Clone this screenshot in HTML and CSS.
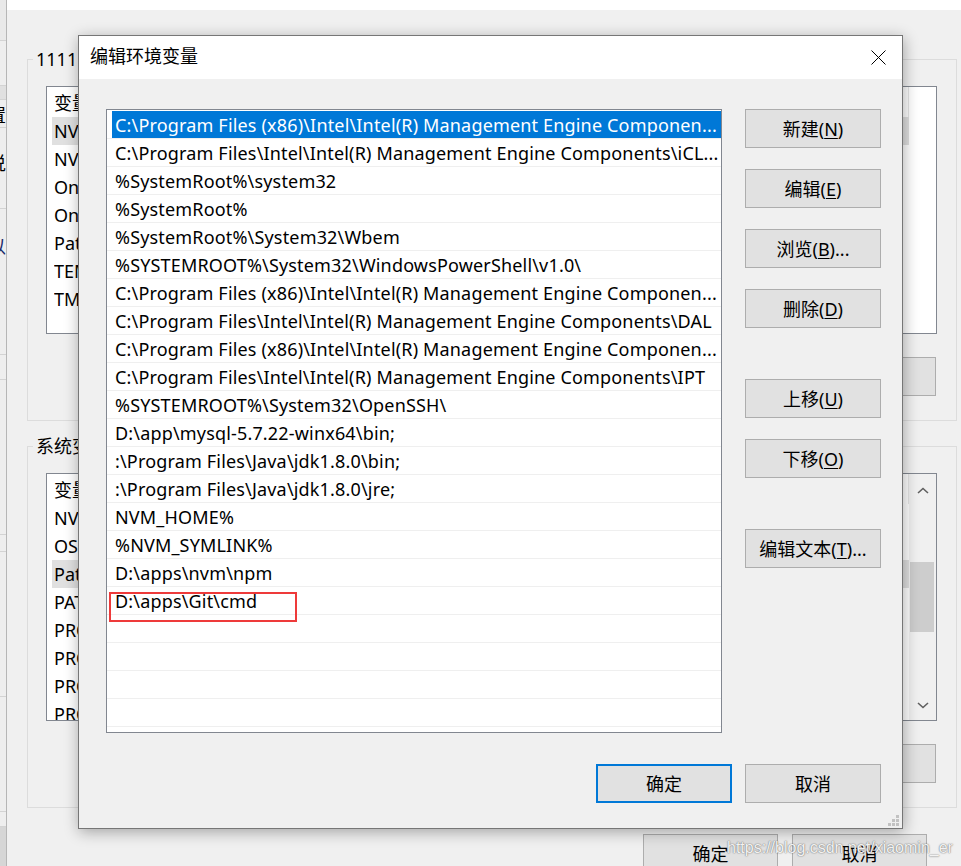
FILE: index.html
```html
<!DOCTYPE html>
<html lang="zh-CN">
<head>
<meta charset="utf-8">
<title>编辑环境变量</title>
<link rel="stylesheet" href="styles.css">
</head>
<body>
<div class="behind">
  <div class="seg h41"></div>
  <div class="seg h45"></div>
  <div class="seg h14 dark"></div>
  <div class="seg h28"><span class="glyph">置</span></div>
  <div class="seg h81"><span class="glyph g2">说</span></div>
  <div class="seg h146"><span class="glyph g3">以</span></div>
  <div class="seg h25"></div>
  <div class="seg h155"></div>
  <div class="seg h17"></div>
  <div class="seg h145"></div>
  <div class="seg h115"></div>
  <div class="seg h15"></div>
  <div class="seg rest"></div>
</div>

<div class="window">
  <div class="topband"></div>

  <fieldset class="group">
    <legend>1111 的用户变量(U)</legend>
    <div class="vlist">
      <div class="vbody">
        <div class="vhead"><span class="c1">变量</span><span class="c2">值</span></div>
        <div class="vrow sel"><span class="c1">NVM_HOME</span><span class="c2">D:\apps\nvm</span></div>
        <div class="vrow"><span class="c1">NVM_SYMLINK</span><span class="c2">D:\apps\nodejs</span></div>
        <div class="vrow"><span class="c1">OneDrive</span><span class="c2">C:\Users\1111\OneDrive</span></div>
        <div class="vrow"><span class="c1">OneDriveConsumer</span><span class="c2">C:\Users\1111\OneDrive</span></div>
        <div class="vrow"><span class="c1">Path</span><span class="c2">%NVM_HOME%;%NVM_SYMLINK%</span></div>
        <div class="vrow"><span class="c1">TEMP</span><span class="c2">%USERPROFILE%\AppData\Local\Temp</span></div>
        <div class="vrow"><span class="c1">TMP</span><span class="c2">%USERPROFILE%\AppData\Local\Temp</span></div>
      </div>
    </div>
    <div class="btnrow">
      <button class="btn wbtn">新建(<u>N</u>)...</button>
      <button class="btn wbtn">编辑(<u>E</u>)...</button>
      <button class="btn wbtn">删除(<u>D</u>)</button>
    </div>
  </fieldset>

  <fieldset class="group second">
    <legend>系统变量(S)</legend>
    <div class="vlist">
      <div class="vbody full">
        <div class="vhead"><span class="c1">变量</span><span class="c2">值</span></div>
        <div class="vrow"><span class="c1">NVM_HOME</span><span class="c2">D:\apps\nvm</span></div>
        <div class="vrow"><span class="c1">OS</span><span class="c2">Windows_NT</span></div>
        <div class="vrow sel"><span class="c1">Path</span><span class="c2">C:\Program Files (x86)\Intel</span></div>
        <div class="vrow"><span class="c1">PATHEXT</span><span class="c2">.COM;.EXE;.BAT;.CMD</span></div>
        <div class="vrow"><span class="c1">PROCESSOR_ARCHITECTURE</span><span class="c2">AMD64</span></div>
        <div class="vrow"><span class="c1">PROCESSOR_IDENTIFIER</span><span class="c2">Intel64 Family 6</span></div>
        <div class="vrow"><span class="c1">PROCESSOR_LEVEL</span><span class="c2">6</span></div>
        <div class="vrow"><span class="c1">PROCESSOR_REVISION</span><span class="c2">9e0a</span></div>
      </div>
      <div class="vscroll">
        <div class="sb-up">
          <svg width="12" height="7" viewBox="0 0 12 7"><path d="M1 6 L6 1.5 L11 6" fill="none" stroke="#606060" stroke-width="1.6"/></svg>
        </div>
        <div class="sb-track"><div class="sb-thumb"></div></div>
        <div class="sb-down">
          <svg width="12" height="7" viewBox="0 0 12 7"><path d="M1 1 L6 5.5 L11 1" fill="none" stroke="#606060" stroke-width="1.6"/></svg>
        </div>
      </div>
    </div>
    <div class="btnrow">
      <button class="btn wbtn">新建(<u>W</u>)...</button>
      <button class="btn wbtn">编辑(<u>I</u>)...</button>
      <button class="btn wbtn">删除(<u>L</u>)</button>
    </div>
  </fieldset>

  <div class="okrow">
    <button class="btn wbtn">确定</button>
    <button class="btn wbtn">取消</button>
  </div>
</div>

<div class="dialog">
  <div class="titlebar">
    <span class="title">编辑环境变量</span>
    <svg class="close" width="15" height="15" viewBox="0 0 15 15"><path d="M0.5 0.5 L14.5 14.5 M14.5 0.5 L0.5 14.5" stroke="#000" stroke-width="1" fill="none"/></svg>
  </div>
  <div class="dbody">
    <div class="dmain">
      <div class="plist">
        <div class="prow sel"><span class="ptxt">C:\Program Files (x86)\Intel\Intel(R) Management Engine Componen...</span></div>
        <div class="prow"><span class="ptxt">C:\Program Files\Intel\Intel(R) Management Engine Components\iCL...</span></div>
        <div class="prow"><span class="ptxt">%SystemRoot%\system32</span></div>
        <div class="prow"><span class="ptxt">%SystemRoot%</span></div>
        <div class="prow"><span class="ptxt">%SystemRoot%\System32\Wbem</span></div>
        <div class="prow"><span class="ptxt">%SYSTEMROOT%\System32\WindowsPowerShell\v1.0\</span></div>
        <div class="prow"><span class="ptxt">C:\Program Files (x86)\Intel\Intel(R) Management Engine Componen...</span></div>
        <div class="prow"><span class="ptxt">C:\Program Files\Intel\Intel(R) Management Engine Components\DAL</span></div>
        <div class="prow"><span class="ptxt">C:\Program Files (x86)\Intel\Intel(R) Management Engine Componen...</span></div>
        <div class="prow"><span class="ptxt">C:\Program Files\Intel\Intel(R) Management Engine Components\IPT</span></div>
        <div class="prow"><span class="ptxt">%SYSTEMROOT%\System32\OpenSSH\</span></div>
        <div class="prow"><span class="ptxt">D:\app\mysql-5.7.22-winx64\bin;</span></div>
        <div class="prow"><span class="ptxt">:\Program Files\Java\jdk1.8.0\bin;</span></div>
        <div class="prow"><span class="ptxt">:\Program Files\Java\jdk1.8.0\jre;</span></div>
        <div class="prow"><span class="ptxt">NVM_HOME%</span></div>
        <div class="prow"><span class="ptxt">%NVM_SYMLINK%</span></div>
        <div class="prow"><span class="ptxt">D:\apps\nvm\npm</span></div>
        <div class="prow"><span class="ptxt">D:\apps\Git\cmd</span></div>
        <div class="prow"><span class="ptxt"></span></div>
        <div class="prow"><span class="ptxt"></span></div>
        <div class="prow"><span class="ptxt"></span></div>
        <div class="prow"><span class="ptxt"></span></div>
        <div class="prow"><span class="ptxt"></span></div>
        <div class="mark"></div>
      </div>
      <div class="btncol">
        <button class="btn">新建(<u>N</u>)</button>
        <button class="btn">编辑(<u>E</u>)</button>
        <button class="btn">浏览(<u>B</u>)...</button>
        <button class="btn">删除(<u>D</u>)</button>
        <button class="btn far">上移(<u>U</u>)</button>
        <button class="btn">下移(<u>O</u>)</button>
        <button class="btn far">编辑文本(<u>T</u>)...</button>
      </div>
    </div>
    <div class="dfoot">
      <button class="btn default">确定</button>
      <button class="btn">取消</button>
    </div>
  </div>
  <svg class="grip" width="11" height="11" viewBox="0 0 11 11">
    <rect x="8" y="0" width="3" height="3" fill="#c2c2c2"/>
    <rect x="4" y="4" width="3" height="3" fill="#c2c2c2"/>
    <rect x="8" y="4" width="3" height="3" fill="#c2c2c2"/>
    <rect x="0" y="8" width="3" height="3" fill="#c2c2c2"/>
    <rect x="4" y="8" width="3" height="3" fill="#c2c2c2"/>
    <rect x="8" y="8" width="3" height="3" fill="#c2c2c2"/>
  </svg>
</div>

<div class="watermark">https://blog.csdn.net/xiaomin_er</div>
</body>
</html>
```

FILE: styles.css
```css
* { box-sizing: border-box; }

html, body { margin: 0; padding: 0; }

body {
  width: 961px;
  height: 866px;
  overflow: hidden;
  position: relative;
  display: flex;
  background: #f0f0f0;
  color: #000;
  font-family: "Noto Sans", "Noto Sans CJK SC", sans-serif;
  font-size: 18px;
}

/* window peeking at the far left */
.behind {
  width: 7px;
  flex: none;
  display: flex;
  flex-direction: column;
  background: #eeeeee;
  border-right: 1px solid #b6b6b6;
  overflow: hidden;
}
.seg {
  flex: none;
  border-bottom: 1px solid #d3d3d3;
  overflow: hidden;
  white-space: nowrap;
  font-family: "Noto Sans CJK SC", sans-serif;
  font-size: 18px;
  line-height: 24px;
}
.seg.dark { background: #e0e0e0; }
.h41 { height: 41px; background: #e9e9e9; }
.h45 { height: 45px; }
.h14 { height: 14px; }
.h28 { height: 28px; padding-top: 2px; }
.h81 { height: 81px; padding-top: 22px; }
.h146 { height: 146px; padding-top: 25px; }
.h25 { height: 25px; }
.h155 { height: 155px; }
.h17 { height: 17px; }
.h145 { height: 145px; }
.h115 { height: 115px; }
.h15 { height: 15px; }
.rest { flex: 1; background: #d6d6d6; border-bottom: 0; }
.glyph { display: block; margin-left: -12px; }
.g3 { color: #1a2a6a; }

/* main background window */
.window {
  flex: 1;
  display: flex;
  flex-direction: column;
}
.topband {
  height: 10px;
  flex: none;
  background: #fff;
}

.group {
  margin: 39px 0 0 20px;
  width: 930px;
  min-width: 0;
  border: 1px solid #dcdcdc;
  padding: 17px 19px 24px 18px;
  flex: none;
}
.group.second { margin-top: 15px; }
.group legend {
  padding: 0 3px;
  margin-left: -13px;
  line-height: 20px;
  font-size: 18px;
}

.vlist {
  height: 248px;
  border: 1px solid #828790;
  background: #fff;
  display: flex;
  overflow: hidden;
}
.vbody {
  width: 862px;
  flex: none;
  overflow: hidden;
}
.vhead {
  height: 30px;
  display: flex;
  align-items: center;
  padding-left: 7px;
  border-right: 1px solid #e5e5e5;
}
.vrow {
  height: 28px;
  line-height: 28px;
  margin-left: 5px;
  padding-left: 2px;
  display: flex;
  white-space: nowrap;
}
.vrow.sel { background: #e0e0e0; }
.c1 { width: 330px; flex: none; overflow: hidden; }
.c2 { width: 400px; flex: none; overflow: hidden; }

.vscroll {
  width: 27px;
  flex: none;
  background: #f0f0f0;
  display: flex;
  flex-direction: column;
}
.sb-up, .sb-down {
  height: 32px;
  flex: none;
  display: flex;
  align-items: center;
  justify-content: center;
}
.sb-down { height: 30px; }
.sb-track {
  flex: 1;
  padding: 56px 2px 0 1px;
}
.sb-thumb {
  height: 70px;
  background: #cdcdcd;
}

.btnrow {
  display: flex;
  justify-content: flex-end;
  gap: 13px;
  margin: 23px 1px 0 0;
}

.btn {
  width: 136px;
  height: 39px;
  padding: 0;
  border: 1px solid #adadad;
  background: #e1e1e1;
  color: #000;
  font-family: "Noto Sans", "Noto Sans CJK SC", sans-serif;
  font-size: 18px;
  line-height: 1;
  flex: none;
}
.btn u { text-underline-offset: 2px; text-decoration-thickness: 1px; }
.wbtn { width: 135px; }

.okrow {
  display: flex;
  justify-content: flex-end;
  gap: 14px;
  margin-top: 26px;
  padding-right: 34px;
}

/* the dialog on top */
.dialog {
  position: absolute;
  left: 78px;
  top: 35px;
  width: 825px;
  height: 794px;
  border: 1px solid #767676;
  background: #f0f0f0;
  box-shadow: 1px 3px 14px rgba(0, 0, 0, 0.32);
  display: flex;
  flex-direction: column;
}
.titlebar {
  height: 43px;
  flex: none;
  background: #fff;
  display: flex;
  align-items: center;
  justify-content: space-between;
  padding: 0 16px 0 11px;
}
.title {
  font-family: "Noto Sans CJK SC", sans-serif;
  font-size: 18px;
  line-height: 24px;
  margin-bottom: 5px;
}
.close { display: block; }

.dbody {
  flex: 1;
  display: flex;
  flex-direction: column;
  padding: 30px 21px 25px 27px;
}
.dmain {
  display: flex;
  gap: 23px;
}
.plist {
  width: 616px;
  height: 624px;
  flex: none;
  border: 1px solid #828790;
  background: #fff;
  padding-top: 1px;
  overflow: hidden;
  position: relative;
}
.prow {
  height: 28px;
  border-bottom: 1px solid #efefef;
  padding-left: 5px;
  display: flex;
}
.ptxt {
  flex: 1;
  padding-left: 3px;
  height: 27px;
  line-height: 28px;
  letter-spacing: 0.17px;
  white-space: nowrap;
  overflow: hidden;
}
.prow.sel .ptxt {
  background: #0078d7;
  color: #fff;
}
.mark {
  position: absolute;
  left: 2px;
  top: 482px;
  width: 188px;
  height: 30px;
  border: 2px solid #ee3a3a;
}

.btncol {
  width: 136px;
  flex: none;
  display: flex;
  flex-direction: column;
  gap: 21px;
}
.btncol .far { margin-top: 30px; }

.dfoot {
  margin-top: 31px;
  display: flex;
  justify-content: flex-end;
  gap: 13px;
}
.btn.default { border: 2px solid #0078d7; }

.grip {
  position: absolute;
  right: 3px;
  bottom: 2px;
}

.watermark {
  position: absolute;
  left: 727px;
  top: 838px;
  font-family: "Liberation Sans", Arial, sans-serif;
  font-size: 16px;
  line-height: 20px;
  color: rgba(255, 255, 255, 0.92);
  text-shadow: 0 0 1px #6a6a6a, 0 0 2px rgba(0, 0, 0, 0.35);
  white-space: nowrap;
}
```
